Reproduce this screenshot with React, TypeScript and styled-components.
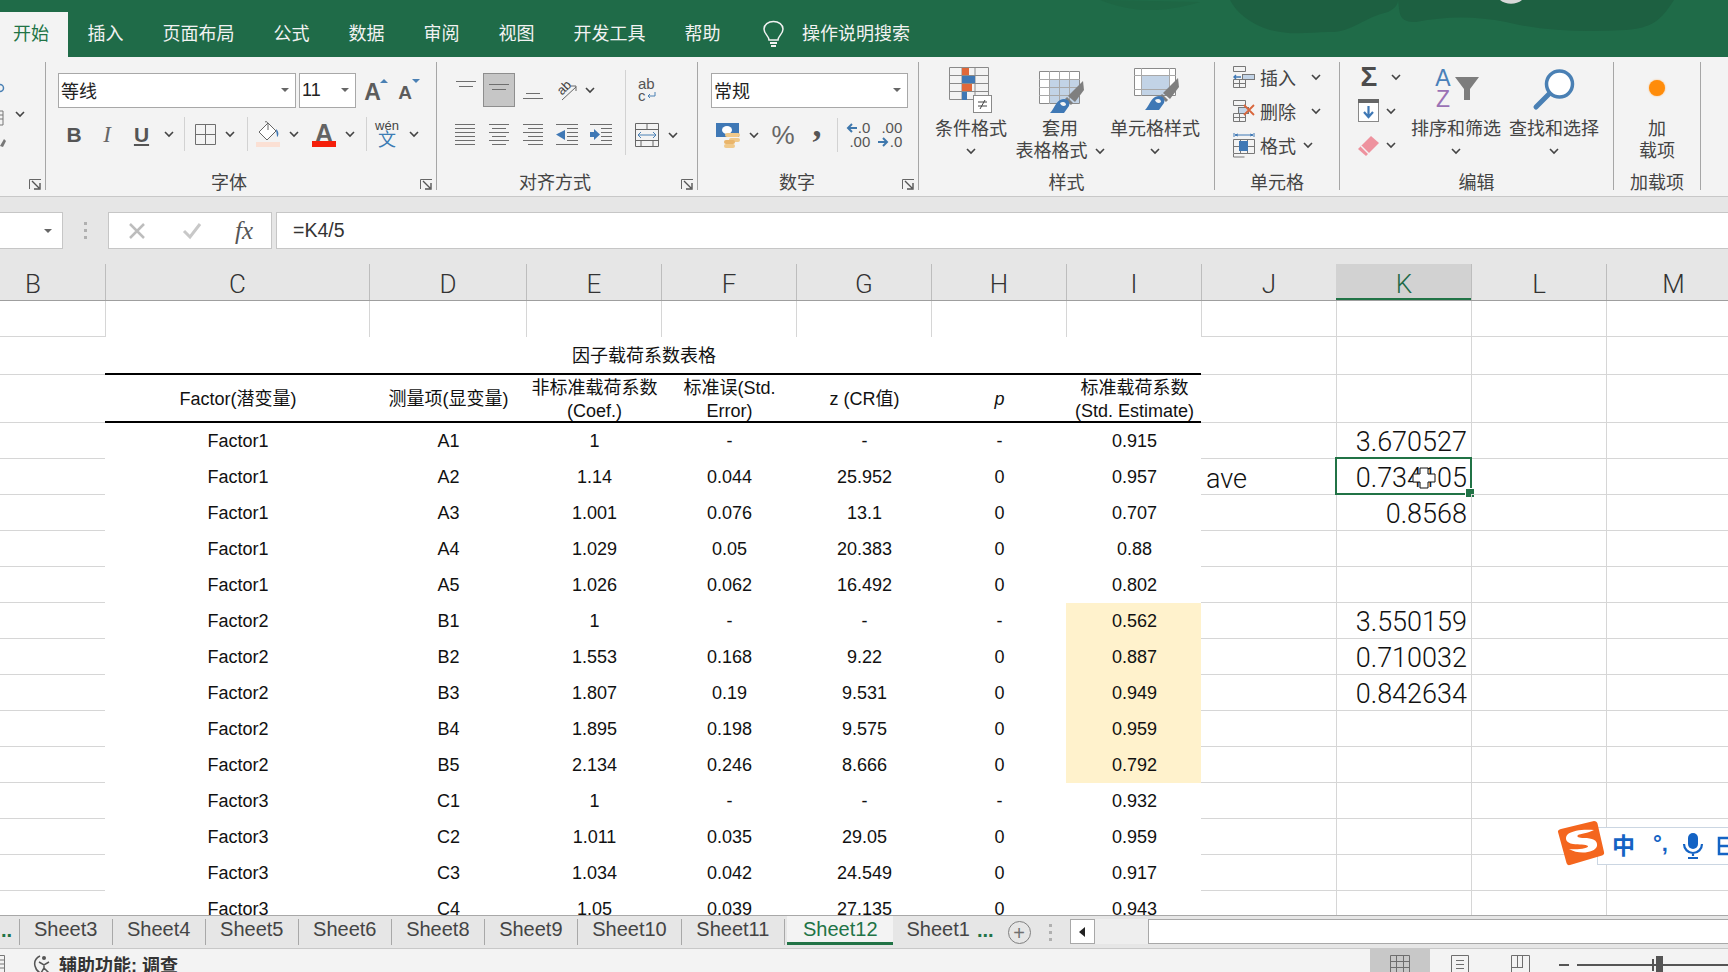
import React from "react";
import styled, { createGlobalStyle } from "styled-components";

const SANS = `"Liberation Sans", "Noto Sans CJK SC", sans-serif`;
const GREEN = "#217346";
const LINE = "#d6d6d6";

const Global = createGlobalStyle`
  html, body { margin: 0; padding: 0; background: #fff; }
  body { font-family: ${SANS}; overflow: hidden; }
  * { box-sizing: border-box; }
  svg { overflow: visible; }
`;

const Page = styled.div`
  position: relative; width: 1728px; height: 972px; overflow: hidden;
  display: flex; flex-direction: column; background: #fff; color: #222;
`;

/* ---------- title tabs ---------- */
const TabStrip = styled.div`
  position: relative; flex: 0 0 57px; display: flex; align-items: flex-end;
  background: #1f6b48; overflow: hidden;
`;
const Decor = styled.svg`
  position: absolute; left: 1080px; top: 0;
`;
const RibbonTab = styled.div<{ $active?: boolean }>`
  height: 45px; line-height: 45px; font-size: 18px; white-space: nowrap;
  padding: ${(p) => (p.$active ? "0 19px 0 13px" : "0 19.5px")};
  background: ${(p) => (p.$active ? "#f3f3f3" : "transparent")};
  color: ${(p) => (p.$active ? GREEN : "#f2f2f2")};
`;
const Bulb = styled.svg`
  margin: 0 18px 8px 23px; align-self: flex-end;
`;
const SearchHint = styled.div`
  height: 45px; line-height: 45px; font-size: 18px; color: #f2f2f2; white-space: nowrap;
`;

/* ---------- ribbon ---------- */
const Ribbon = styled.div`
  flex: 0 0 140px; display: flex; background: #f3f3f3; border-bottom: 1px solid #c8c8c8;
  padding-top: 5px; color: #333;
`;
const Group = styled.div<{ $w: number; $last?: boolean }>`
  position: relative; flex: 0 0 ${(p) => p.$w}px; height: 128px; display: flex; flex-direction: column;
  border-right: ${(p) => (p.$last ? "none" : "1px solid #a6a6a6")};
`;
const GroupBody = styled.div<{ $pl?: number; $column?: boolean }>`
  flex: 0 0 110px; display: flex; flex-direction: ${(p) => (p.$column ? "column" : "row")};
  padding-left: ${(p) => p.$pl ?? 0}px;
`;
const GroupLabel = styled.div<{ $pr?: number }>`
  height: 22px; line-height: 22px; text-align: center; font-size: 18px; color: #444; white-space: nowrap;
  padding-right: ${(p) => p.$pr ?? 0}px;
`;
const Launcher = styled.svg`
  position: absolute; right: 3px; bottom: 0;
`;
const ToolRow = styled.div<{ $top?: number }>`
  display: flex; align-items: center; height: 34px; margin-top: ${(p) => p.$top ?? 0}px;
`;
const Tool = styled.div<{ $w: number }>`
  flex: 0 0 ${(p) => p.$w}px; height: 100%; display: flex; align-items: center; justify-content: center;
  position: relative;
`;
const ToolSelected = styled(Tool)`
  background: #c6c6c6; border: 1px solid #8e8e8e;
`;
const ThinSep = styled.div<{ $w: number }>`
  flex: 0 0 ${(p) => p.$w}px; height: 34px; display: flex; justify-content: center;
  &::before { content: ""; width: 1px; background: #d2d2d2; }
`;
const Combo = styled.div<{ $w: number; $gap?: number }>`
  flex: 0 0 ${(p) => p.$w}px; height: 35px; background: #fff; border: 1px solid #a8a8a8;
  margin-left: ${(p) => p.$gap ?? 0}px;
  display: flex; align-items: center; justify-content: space-between;
  padding: 0 6px 0 2px; font-size: 18px; color: #222;
`;
const ComboCaret = styled.i`
  width: 0; height: 0; border: 4px solid transparent; border-top: 4px solid #666; border-bottom: 0;
`;
const ScaleA = styled.span<{ $size: number }>`
  font-size: ${(p) => p.$size}px; font-weight: 700; color: #5c5c5c; line-height: 1; margin-top: 5px;
`;
const ScaleMark = styled.i<{ $down?: boolean }>`
  position: absolute; right: 1px; top: 6px; width: 0; height: 0; border: 4px solid transparent;
  ${(p) => (p.$down ? "border-top: 4px solid #4a80b4; border-bottom: 0;" : "border-bottom: 4px solid #4a80b4; border-top: 0;")}
`;
const Glyph = styled.span<{ $bold?: boolean; $italic?: boolean; $serif?: boolean; $under?: boolean; $size?: number; $color?: string }>`
  font-family: ${(p) => (p.$serif ? `"Liberation Serif", serif` : SANS)};
  font-weight: ${(p) => (p.$bold ? 700 : 400)};
  font-style: ${(p) => (p.$italic ? "italic" : "normal")};
  text-decoration: ${(p) => (p.$under ? "underline" : "none")};
  font-size: ${(p) => p.$size ?? 20}px; color: ${(p) => p.$color ?? "#555"}; line-height: 1;
`;
const CommaGlyph = styled(Glyph)`
  margin-top: -22px;
`;
const FontColor = styled.div`
  display: flex; flex-direction: column; align-items: center; width: 24px; line-height: 1;
  font-weight: 700; font-size: 25px; color: #636363; height: 26px; position: relative;
  &::after { content: ""; position: absolute; left: 0; right: 0; bottom: 0; height: 6px; background: #f51f0a; }
`;
const Ruby = styled.div`
  display: flex; flex-direction: column; align-items: center; line-height: 1; color: #444; font-size: 13px;
  b { font-weight: 400; color: #3c7cb4; font-size: 18px; margin-top: -1px; }
`;
const DecimalStack = styled.div`
  display: flex; flex-direction: column; font-size: 15px; line-height: 14px; color: #555; align-items: flex-end;
  span { display: flex; align-items: center; gap: 1px; }
`;
const BlockSep = styled.div`
  flex: 0 0 1px; height: 85px; margin-top: 8px; background: #d2d2d2;
`;
const Block = styled.div<{ $w: number; $pl?: number; $top?: number }>`
  flex: 0 0 ${(p) => p.$w}px; padding-left: ${(p) => p.$pl ?? 0}px; padding-top: ${(p) => p.$top ?? 0}px;
  margin-top: ${(p) => (p.$top === undefined ? -2 : 0)}px;
`;
const BigButton = styled.div<{ $w: number }>`
  flex: 0 0 ${(p) => p.$w}px; display: flex; flex-direction: column; align-items: center;
  padding-top: 6px; font-size: 18px; line-height: 22px; color: #444; white-space: nowrap;
`;
const BigIcon = styled.div`
  height: 50px; margin-top: -1px; margin-bottom: 1px; display: flex; align-items: flex-start; justify-content: center; position: relative;
`;
const ChevLine = styled.div`
  height: 22px; display: flex; align-items: center; justify-content: center; gap: 7px;
`;
const CellStack = styled.div`
  margin-top: -2px;
`;
const CellAction = styled.div`
  display: flex; align-items: center; height: 34px; font-size: 18px; color: #444; gap: 5px;
`;
const ClipLeft = styled.div`
  position: relative; height: 110px;
`;
const ClipIcon = styled.svg`
  position: absolute; left: 0; top: 15px;
`;
const SortLetters = styled.div`
  display: flex; flex-direction: column; align-items: center; font-size: 23px; line-height: 21px; width: 20px;
  span:first-child { color: #4a80b9; }
  span:last-child { color: #9a72b5; }
`;
const SortIcon = styled.div`
  display: flex; align-items: center; gap: 2px; height: 44px;
`;
const DotWrap = styled.div`
  width: 16px; height: 16px; margin-top: 13px; border-radius: 50%; background: #ff8c0a;
  box-shadow: 0 0 2px #ffb060;
`;

/* ---------- formula bar ---------- */
const FormulaArea = styled.div`
  flex: 0 0 52px; background: #e6e6e6; padding-top: 15px; display: flex;
`;
const NameBox = styled.div`
  width: 63px; height: 37px; background: #fff; border: 1px solid #c6c6c6; border-left: 0;
  display: flex; align-items: center; justify-content: flex-end; padding-right: 10px;
`;
const Grip = styled.div`
  width: 45px; display: flex; flex-direction: column; align-items: center; justify-content: center; gap: 4px;
  i { width: 3px; height: 3px; background: #b0b0b0; }
`;
const FormulaButtons = styled.div`
  width: 164px; height: 37px; background: #fff; border: 1px solid #c6c6c6; display: flex; align-items: center;
`;
const FormulaBtn = styled.div<{ $w: number }>`
  flex: 0 0 ${(p) => p.$w}px; display: flex; justify-content: center; align-items: center;
`;
const FormulaInput = styled.div`
  flex: 1; margin-left: 4px; height: 37px; background: #fff; border: 1px solid #c6c6c6; border-right: 0;
  display: flex; align-items: center; padding-left: 16px; font-size: 19.5px; color: #333;
`;

/* ---------- grid ---------- */
const GRID = "105px 264px 157px repeat(8, 135px) 122px";
const ColumnBand = styled.div`
  flex: 0 0 52px; background: #e6e6e6; padding-top: 15px; border-bottom: 1px solid #9f9f9f;
  display: grid; grid-template-columns: ${GRID};
`;
const ColHead = styled.div<{ $active?: boolean; $last?: boolean; $first?: boolean }>`
  position: relative; display: flex; align-items: center; justify-content: center; font-family: Roboto, sans-serif; font-weight: 300;
  font-size: 26px; padding-top: 3px; color: ${(p) => (p.$active ? "#1d6a47" : "#333")};
  padding-right: ${(p) => (p.$first ? 40 : 0)}px; padding-left: ${(p) => (p.$last ? 13 : 1)}px;
  background: ${(p) => (p.$active ? "#d2d2d2" : "transparent")};
  box-shadow: ${(p) => (p.$last ? "none" : "1px 0 0 #bdbdbd")}${(p) => (p.$active ? `, inset 0 -2px 0 ${GREEN}` : "")};
`;
const Sheet = styled.div`
  flex: 0 0 614px; overflow: hidden; background: #fff;
`;
const Row = styled.div<{ $h: number }>`
  display: grid; grid-template-columns: ${GRID}; grid-template-rows: minmax(0, 1fr); height: ${(p) => p.$h}px;
`;
const Cell = styled.div<{ $r?: boolean; $b?: boolean; $thick?: boolean; $fill?: string }>`
  position: relative; display: flex; align-items: center; justify-content: center; text-align: center; min-height: 0;
  padding-left: 2px;
  font-size: 18px; line-height: 23px; color: #111; white-space: pre-line;
  box-shadow: ${(p) => (p.$r ? `1px 0 0 ${LINE}` : "none")};
  border-bottom: ${(p) => (p.$thick ? "2px solid #000" : p.$b ? `1px solid ${LINE}` : "none")};
  background: ${(p) => p.$fill ?? "transparent"};
`;
const HeadCell = styled(Cell)`
  padding-top: 3px;
`;
const TitleCell = styled(Cell)`
  grid-column: span 7; padding: 2px 18px 0 0;
`;
const CalcCell = styled(Cell)`
  justify-content: flex-end; padding: 4px 4px 0 0; font-family: Roboto, sans-serif; font-weight: 300; font-size: 27px; color: #111;
`;
const TextCell = styled(CalcCell)`
  justify-content: flex-start; padding: 6px 0 0 5px;
`;
const PValue = styled.span`
  font-style: italic;
`;
const Selection = styled.div`
  position: absolute; inset: -2px -1px -1px -1px; border: 2px solid ${GREEN}; pointer-events: none;
  &::after { content: ""; position: absolute; right: -5px; bottom: -5px; width: 8px; height: 8px; background: ${GREEN}; border: 1px solid #fff; }
`;
const CursorMark = styled.svg`
  position: absolute; left: 76px; top: 8px;
`;

/* ---------- sheet tabs ---------- */
const TabsBar = styled.div`
  flex: 0 0 34px; background: #e6e6e6; border-top: 1px solid #a8a8a8; border-bottom: 1px solid #c8c8c8;
  display: flex; align-items: stretch; padding-top: 3px; color: #444; font-size: 20px;
`;
const More = styled.div<{ $w?: number }>`
  flex: 0 0 ${(p) => p.$w ?? 20}px; color: ${GREEN}; font-weight: 700; line-height: 22px; height: 26px;
  text-align: ${(p) => (p.$w ? "center" : "left")}; padding-left: ${(p) => (p.$w ? 0 : 1)}px;
  border-right: ${(p) => (p.$w ? "none" : "1px solid #a8a8a8")};
`;
const SheetTab = styled.div<{ $active?: boolean; $plain?: boolean }>`
  height: ${(p) => (p.$active ? "29px" : "26px")}; line-height: 20px; white-space: nowrap;
  margin: ${(p) => (p.$active ? "-3px 0 0 2px" : "0")};
  padding: ${(p) => (p.$active ? "3px 15px 0 16px" : p.$plain ? "0 7px 0 14px" : "0 14.65px 0 14px")};
  background: ${(p) => (p.$active ? "#f3f3f3" : "transparent")};
  color: ${(p) => (p.$active ? GREEN : "#444")};
  border-right: ${(p) => (p.$active || p.$plain ? "none" : "1px solid #a8a8a8")};
  border-bottom: ${(p) => (p.$active ? `3px solid ${GREEN}` : "none")};
`;
const AddSheet = styled.div`
  width: 23px; height: 23px; margin: 2px 0 0 14px; border: 1.5px solid #808080; border-radius: 50%;
  display: flex; align-items: center; justify-content: center; color: #707070; font-size: 20px; line-height: 1;
`;
const TabGrip = styled(Grip)`
  width: 39px; height: 26px;
`;
const ScrollButton = styled.div`
  width: 25px; height: 25px; background: #fff; border: 1px solid #a8a8a8;
  display: flex; align-items: center; justify-content: center;
  &::before { content: ""; border: 5px solid transparent; border-right: 6px solid #222; border-left: 0; }
`;
const ScrollGap = styled.div`
  width: 53px; height: 25px; background: #eeeeee;
`;
const ScrollTrack = styled.div`
  flex: 1; height: 25px; background: #fff; border: 1px solid #a8a8a8; border-right: 0;
`;

/* ---------- status ---------- */
const StatusBar = styled.div`
  flex: 0 0 23px; background: #f3f3f3; display: flex; align-items: flex-start; overflow: hidden; color: #333;
`;
const StatusLeftIcon = styled.svg`
  margin: 6px 0 0 0;
`;
const AccessIcon = styled.svg`
  margin: 6px 5px 0 28px;
`;
const StatusText = styled.div`
  font-size: 18px; font-weight: 700; line-height: 22px; margin-top: 6px; white-space: nowrap;
`;
const ViewButton = styled.div<{ $active?: boolean }>`
  flex: 0 0 60px; height: 23px; display: flex; justify-content: center; padding-top: 6px;
  background: ${(p) => (p.$active ? "#c8c8c8" : "transparent")};
`;
const StatusRight = styled.div`
  margin-left: auto; display: flex; align-items: flex-start;
`;
const ZoomMinus = styled.div`
  width: 10px; height: 2px; background: #555; margin: 15px 0 0 9px;
`;
const ZoomTrack = styled.div`
  position: relative; width: 151px; height: 2px; background: #555; margin: 15px 0 0 8px;
  &::before { content: ""; position: absolute; left: 75px; top: -5px; width: 2px; height: 12px; background: #555; }
`;
const ZoomThumb = styled.div`
  position: absolute; left: 79px; top: -8px; width: 7px; height: 18px; background: #555;
`;

/* ---------- IME ---------- */
const Ime = styled.div`
  position: absolute; left: 1557px; top: 820px; width: 171px; height: 46px; font-family: ${SANS};
`;
const ImeBar = styled.div`
  position: absolute; left: 40px; top: 7px; right: 0; height: 38px; background: #fff; overflow: hidden;
  border: 1.5px solid #cbd6e2; border-right: 0; display: flex; align-items: center; padding-left: 14px; gap: 15px;
  color: #1463c4;
`;
const ImeZh = styled.span`
  font-size: 23px; font-weight: 700; line-height: 1;
`;
const ImePunct = styled.span`
  font-size: 22px; font-weight: 700; line-height: 1; margin: -4px 0 0 3px; white-space: nowrap; width: 24px;
`;
const ImeLogo = styled.svg`
  position: absolute; left: 0; top: 0;
`;

/* ---------- small drawings ---------- */
const Chev = ({ c = "#444" }: { c?: string }) => (
  <svg width="10" height="7" viewBox="0 0 10 7"><polyline points="1,1 5,5 9,1" fill="none" stroke={c} strokeWidth="1.6" /></svg>
);
const Lines = ({ w, rows, dy = 4, h, c = "#6e6e6e" }: { w: number; rows: [number, number][]; dy?: number; h: number; c?: string }) => (
  <svg width={w} height={h} viewBox={`0 0 ${w} ${h}`}>
    {rows.map(([a, b], i) => <line key={i} x1={a} x2={b} y1={i * dy + 0.5} y2={i * dy + 0.5} stroke={c} strokeWidth="1" />)}
  </svg>
);
const LauncherIcon = () => (
  <Launcher width="13" height="11" viewBox="0 0 13 11">
    <path d="M0.5 10V0.5H12" fill="none" stroke="#666" /><path d="M3 2l7 7M5 10h6V4" fill="none" stroke="#555" strokeWidth="1.4" />
  </Launcher>
);
const GridIcon = ({ children, w, h }: { children: React.ReactNode; w: number; h: number }) => (
  <svg width={w} height={h} viewBox={`0 0 ${w} ${h}`}>{children}</svg>
);
const Brush = ({ x, y }: { x: number; y: number }) => (
  <g transform={`translate(${x} ${y})`}>
    <path d="M33 3l1 9-9 12-7-6z" fill="#7f7f7f" />
    <path d="M16 20l6 6" stroke="#7f7f7f" strokeWidth="3" />
    <path d="M0 35c4-4 5-10 10-13 6-3 11 1 9 6l-5 7z" fill="#3f78b5" />
    <path d="M10 25c3-2 6-1 6 2-2 2-5 1-6-2z" fill="#f3f3f3" />
  </g>
);
const ArrowLeft = () => (
  <svg width="11" height="10" viewBox="0 0 11 10"><path d="M11 5H3M6 1L2 5l4 4" fill="none" stroke="#3f78ad" strokeWidth="2" /></svg>
);
const ArrowRight = () => (
  <svg width="11" height="10" viewBox="0 0 11 10"><path d="M0 5h8M5 1l4 4-4 4" fill="none" stroke="#3f78ad" strokeWidth="2" /></svg>
);

const rows: string[][] = [
  ["Factor1", "A1", "1", "-", "-", "-", "0.915"],
  ["Factor1", "A2", "1.14", "0.044", "25.952", "0", "0.957"],
  ["Factor1", "A3", "1.001", "0.076", "13.1", "0", "0.707"],
  ["Factor1", "A4", "1.029", "0.05", "20.383", "0", "0.88"],
  ["Factor1", "A5", "1.026", "0.062", "16.492", "0", "0.802"],
  ["Factor2", "B1", "1", "-", "-", "-", "0.562"],
  ["Factor2", "B2", "1.553", "0.168", "9.22", "0", "0.887"],
  ["Factor2", "B3", "1.807", "0.19", "9.531", "0", "0.949"],
  ["Factor2", "B4", "1.895", "0.198", "9.575", "0", "0.959"],
  ["Factor2", "B5", "2.134", "0.246", "8.666", "0", "0.792"],
  ["Factor3", "C1", "1", "-", "-", "-", "0.932"],
  ["Factor3", "C2", "1.011", "0.035", "29.05", "0", "0.959"],
  ["Factor3", "C3", "1.034", "0.042", "24.549", "0", "0.917"],
  ["Factor3", "C4", "1.05", "0.039", "27.135", "0", "0.943"],
];
const kValues: Record<number, string> = { 0: "3.670527", 1: "0.734105", 2: "0.8568", 5: "3.550159", 6: "0.710032", 7: "0.842634" };
const headers = ["Factor(潜变量)", "测量项(显变量)", "非标准载荷系数\n(Coef.)", "标准误(Std.\nError)", "z (CR值)", "", "标准载荷系数\n(Std. Estimate)"];
const letters = ["B", "C", "D", "E", "F", "G", "H", "I", "J", "K", "L", "M"];
const ribbonTabs = ["插入", "页面布局", "公式", "数据", "审阅", "视图", "开发工具", "帮助"];
const sheets = ["Sheet3", "Sheet4", "Sheet5", "Sheet6", "Sheet8", "Sheet9", "Sheet10", "Sheet11"];

const RightCols = ({ k, ave, sel }: { k?: string; ave?: boolean; sel?: boolean }) => (
  <>
    {ave ? <TextCell $r $b>ave</TextCell> : <Cell $r $b />}
    <CalcCell $r $b>
      {k}
      {sel && <Selection />}
      {sel && (
        <CursorMark width="24" height="22" viewBox="0 0 24 22">
          <path d="M8 1h8v6h7v8h-7v6H8v-6H1V7h7z" fill="#fff" stroke="#111" strokeWidth="1" />
        </CursorMark>
      )}
    </CalcCell>
    <Cell $r $b />
    <Cell $b />
  </>
);

export default function App() {
  return (
    <Page>
      <Global />
      <TabStrip>
        <Decor width="648" height="57" viewBox="0 0 648 57">
          <path d="M20 0c30 12 60 14 100 2z" fill="#1e6644" />
          <path d="M150 0c6 12 20 24 40 30 24 6 40 2 58 2 24 1 34-14 60-20 8-4 10-8 10-12z" fill="#1d6041" />
          <path d="M318 0c2 14 0 22 18 22 30-6 60-6 90 0 40 10 80 10 120 8 26-2 34-10 44-24l4-6z" fill="#1d6041" />
          <path d="M420 0c6 5 16 5 22 0z" fill="#d8d8d8" />
        </Decor>
        <RibbonTab $active>开始</RibbonTab>
        {ribbonTabs.map((t) => <RibbonTab key={t}>{t}</RibbonTab>)}
        <Bulb width="21" height="28" viewBox="0 0 21 28">
          <path d="M6 19c0-4-5-6-5-11a9.500 7.500 0 0 1 19 0c0 5-5 7-5 11z" fill="none" stroke="#f2f2f2" strokeWidth="1.5" />
          <path d="M7 22h7M8 25h5" stroke="#f2f2f2" strokeWidth="2" />
        </Bulb>
        <SearchHint>操作说明搜索</SearchHint>
      </TabStrip>

      <Ribbon>
        <Group $w={46}>
          <ClipLeft>
            <ClipIcon width="28" height="80" viewBox="0 0 28 80">
              <circle cx="0" cy="11" r="3.500" fill="none" stroke="#4a80b4" strokeWidth="1.5" />
              <path d="M-3 34h6v14h-6M0 38h3M0 42h3" fill="none" stroke="#777" />
              <path d="M0 69l4-7 2 2-3 6z" fill="#777" />
              <polyline points="16,35 20,39 24,35" fill="none" stroke="#444" strokeWidth="1.6" />
            </ClipIcon>
          </ClipLeft>
          <LauncherIcon />
        </Group>

        <Group $w={391}>
          <GroupBody $column $pl={12}>
            <ToolRow $top={11}>
              <Combo $w={238}>等线<ComboCaret /></Combo>
              <Combo $w={57} $gap={3}>11<ComboCaret /></Combo>
              <Tool $w={33}><ScaleA $size={23}>A</ScaleA><ScaleMark /></Tool>
              <Tool $w={32}><ScaleA $size={19}>A</ScaleA><ScaleMark $down /></Tool>
            </ToolRow>
            <ToolRow $top={10}>
              <Tool $w={32}><Glyph $bold $size={21}>B</Glyph></Tool>
              <Tool $w={34}><Glyph $italic $serif $size={23} $color="#666">I</Glyph></Tool>
              <Tool $w={35}><Glyph $under $size={21} $bold>U</Glyph></Tool>
              <Tool $w={20}><Chev /></Tool>
              <ThinSep $w={11} />
              <Tool $w={30}>
                <GridIcon w={21} h={21}><path d="M.5.5h20v20H.5zM10.500 0v21M0 10.500h21" fill="none" stroke="#6e6e6e" /></GridIcon>
              </Tool>
              <Tool $w={20}><Chev /></Tool>
              <ThinSep $w={14} />
              <Tool $w={28}>
                <GridIcon w={24} h={26}>
                  <path d="M12 2l-9 9 8 8 9-9z" fill="#fff" stroke="#666" />
                  <path d="M9 1c1-1 3 0 3 2v6" fill="none" stroke="#666" />
                  <path d="M20 8c3 2 3 7 1 8 0-3-1-5-1-8z" fill="#3f78b5" />
                  <rect y="21" width="24" height="5" fill="#fbe0d4" />
                </GridIcon>
              </Tool>
              <Tool $w={24}><Chev /></Tool>
              <Tool $w={36}><FontColor>A</FontColor></Tool>
              <Tool $w={16}><Chev /></Tool>
              <ThinSep $w={16} />
              <Tool $w={26}><Ruby>wén<b>文</b></Ruby></Tool>
              <Tool $w={28}><Chev /></Tool>
            </ToolRow>
          </GroupBody>
          <GroupLabel $pr={24}>字体</GroupLabel>
          <LauncherIcon />
        </Group>

        <Group $w={261}>
          <GroupBody $pl={11}>
            <Block $w={177} $top={11}>
              <ToolRow>
                <Tool $w={35}>
                  <svg width="20" height="18" viewBox="0 0 20 18"><path d="M0 .5h20M3 5.500h14" stroke="#6e6e6e" /></svg>
                </Tool>
                <ToolSelected $w={32}>
                  <Lines w={20} h={12} dy={5} rows={[[0, 20], [3, 17]]} />
                </ToolSelected>
                <Tool $w={36}>
                  <svg width="20" height="22" viewBox="0 0 20 22"><path d="M3 14.500h14M0 19.500h20" stroke="#6e6e6e" /></svg>
                </Tool>
                <Tool $w={32}>
                  <svg width="24" height="24" viewBox="0 0 24 24">
                    <text x="2" y="14" fontSize="13" fill="#444" fontFamily="Liberation Sans" transform="rotate(-45 9 10)">ab</text>
                    <path d="M7 22L21 9M16 8h5v5" fill="none" stroke="#666" />
                  </svg>
                </Tool>
                <Tool $w={14}><Chev /></Tool>
              </ToolRow>
              <ToolRow $top={11}>
                <Tool $w={34}><Lines w={20} h={22} rows={[[0, 20], [0, 20], [0, 20], [0, 20], [0, 20], [0, 20]]} /></Tool>
                <Tool $w={34}><Lines w={20} h={22} rows={[[0, 20], [3, 17], [0, 20], [3, 17], [0, 20], [3, 17]]} /></Tool>
                <Tool $w={34}><Lines w={20} h={22} rows={[[0, 20], [5, 20], [0, 20], [5, 20], [0, 20], [5, 20]]} /></Tool>
                <Tool $w={34}>
                  <svg width="22" height="22" viewBox="0 0 22 22">
                    <path d="M0 .5h22M11 4.500h11M11 8.500h11M11 12.500h11M11 16.500h11M0 20.500h22" stroke="#6e6e6e" />
                    <path d="M9 6v10L0 10.500z" fill="#3f78b5" />
                  </svg>
                </Tool>
                <Tool $w={34}>
                  <svg width="22" height="22" viewBox="0 0 22 22">
                    <path d="M0 .5h22M11 4.500h11M11 8.500h11M11 12.500h11M11 16.500h11M0 20.500h22" stroke="#6e6e6e" />
                    <path d="M0 8h4V5l6 5.500L4 16v-3H0z" fill="#3f78b5" />
                  </svg>
                </Tool>
              </ToolRow>
            </Block>
            <BlockSep />
            <Block $w={64} $pl={8} $top={11}>
              <ToolRow>
                <Tool $w={28}>
                  <svg width="22" height="26" viewBox="0 0 22 26">
                    <text x="1" y="12" fontSize="15" fill="#555" fontFamily="Liberation Sans">ab</text>
                    <text x="1" y="24" fontSize="15" fill="#555" fontFamily="Liberation Sans">c</text>
                    <path d="M18 15v4h-7M13 17l-2 2 2 2" fill="none" stroke="#4a80b4" />
                  </svg>
                </Tool>
              </ToolRow>
              <ToolRow $top={11}>
                <Tool $w={26}>
                  <GridIcon w={24} h={24}>
                    <path d="M.5.5h23v23H.5zM0 6.500h24M0 17.500h24M12 0v6M6 18v6M18 18v6M12 6" fill="none" stroke="#666" />
                    <path d="M3 12h18M6 9l-3 3 3 3M18 9l3 3-3 3" fill="none" stroke="#4a80b4" />
                  </GridIcon>
                </Tool>
                <Tool $w={26}><Chev /></Tool>
              </ToolRow>
            </Block>
          </GroupBody>
          <GroupLabel $pr={24}>对齐方式</GroupLabel>
          <LauncherIcon />
        </Group>

        <Group $w={221}>
          <GroupBody $column $pl={13}>
            <ToolRow $top={11}><Combo $w={197}>常规<ComboCaret /></Combo></ToolRow>
            <ToolRow $top={11}>
              <Tool $w={34}>
                <GridIcon w={24} h={25}>
                  <rect width="23" height="14" fill="#3f78b5" />
                  <ellipse cx="11" cy="7" rx="5" ry="4" fill="#fff" />
                  <rect x="9" y="10" width="15" height="4" rx="2" fill="#f0c98a" />
                  <rect x="13" y="15" width="11" height="4" rx="2" fill="#f0c98a" />
                  <rect x="8" y="17" width="11" height="4" rx="2" fill="#eab56a" />
                  <rect x="8" y="21" width="11" height="4" rx="2" fill="#f0c98a" />
                </GridIcon>
              </Tool>
              <Tool $w={18}><Chev /></Tool>
              <Tool $w={40}><Glyph $size={26} $color="#666">%</Glyph></Tool>
              <Tool $w={28}><CommaGlyph $bold $serif $size={36} $color="#555">,</CommaGlyph></Tool>
              <ThinSep $w={12} />
              <Tool $w={30}>
                <DecimalStack><span><ArrowLeft />.0</span><span>.00</span></DecimalStack>
              </Tool>
              <Tool $w={34}>
                <DecimalStack><span>.00</span><span><ArrowRight />.0</span></DecimalStack>
              </Tool>
            </ToolRow>
          </GroupBody>
          <GroupLabel $pr={22}>数字</GroupLabel>
          <LauncherIcon />
        </Group>

        <Group $w={296}>
          <GroupBody $pl={8}>
            <BigButton $w={88}>
              <BigIcon>
                <GridIcon w={44} h={46}>
                  <path d="M.5.5h39v32H.5zM0 8.500h40M0 16.500h40M0 24.500h40M13 0v33M26 0v33" fill="none" stroke="#8a8a8a" />
                  <rect x="13" y="1" width="7" height="7" fill="#e0683a" />
                  <rect x="13" y="9" width="13" height="7" fill="#3f78b5" />
                  <rect x="13" y="17" width="10" height="7" fill="#e0683a" />
                  <rect x="13" y="25" width="5" height="8" fill="#3f78b5" />
                  <rect x="24.500" y="28.500" width="18" height="17" fill="#fff" stroke="#8a8a8a" />
                  <path d="M29 35h9M29 39h9M36 33l-5 9" stroke="#444" fill="none" />
                </GridIcon>
              </BigIcon>
              条件格式
              <ChevLine><Chev /></ChevLine>
            </BigButton>
            <BigButton $w={90}>
              <BigIcon>
                <GridIcon w={48} h={47}>
                  <path d="M3.500 4.500h40v32h-40z" fill="#fff" stroke="#8a8a8a" />
                  <rect x="13" y="12" width="30" height="24" fill="#c2d3e6" />
                  <path d="M3 12.500h41M3 20.500h41M3 28.500h41M13.500 4v33M23.500 4v33M33.500 4v33" fill="none" stroke="#a8a8a8" />
                  <Brush x={14} y={11} />
                </GridIcon>
              </BigIcon>
              套用
              <ChevLine>表格格式<Chev /></ChevLine>
            </BigButton>
            <BigButton $w={100}>
              <BigIcon>
                <GridIcon w={48} h={44}>
                  <path d="M3.500 1.500h41v27h-41z" fill="#fff" stroke="#8a8a8a" />
                  <rect x="10" y="8" width="28" height="20" fill="#c2d3e6" />
                  <path d="M3 8.500h42M3 22.500h42M10.500 1v28M38.500 1v28" fill="none" stroke="#a8a8a8" />
                  <Brush x={14} y={8} />
                </GridIcon>
              </BigIcon>
              单元格样式
              <ChevLine><Chev /></ChevLine>
            </BigButton>
          </GroupBody>
          <GroupLabel>样式</GroupLabel>
        </Group>

        <Group $w={125}>
          <GroupBody $column $pl={18}>
            <CellStack>
              <CellAction>
                <GridIcon w={22} h={22}>
                  <path d="M.5.5h12v5H.5zM.5 13.500h12v8H.5zM6.500 14v8M0 17.500h13" fill="none" stroke="#777" />
                  <rect x="9.500" y="8.500" width="12" height="5" fill="#c2d3e6" stroke="#777" />
                  <path d="M8 11H1M3 9l-2 2 2 2" fill="none" stroke="#3f78b5" strokeWidth="1.4" />
                </GridIcon>
                插入
                <Tool $w={30}><Chev /></Tool>
              </CellAction>
              <CellAction>
                <GridIcon w={22} h={22}>
                  <path d="M.5.5h12v5H.5zM.5 13.500h12v8H.5zM6.500 14v8M0 17.500h13" fill="none" stroke="#777" />
                  <rect x="5.500" y="7.500" width="10" height="6" fill="#c2d3e6" stroke="#777" />
                  <path d="M11 5l10 10M21 5L11 15" stroke="#d9663c" strokeWidth="1.8" />
                </GridIcon>
                删除
                <Tool $w={30}><Chev /></Tool>
              </CellAction>
              <CellAction>
                <GridIcon w={22} h={24}>
                  <path d="M.5 6.500h21v14H.5zM7.500 6v15M14.500 6v15M0 13.500h22M.5 21v3h11" fill="none" stroke="#777" />
                  <rect x="6" y="8" width="9" height="10" fill="#3f78b5" />
                  <path d="M1 0v4M21 0v4M2 2h18M5 1L2 2l3 1M17 1l3 1-3 1" fill="none" stroke="#3f78b5" />
                </GridIcon>
                格式
                <Tool $w={14}><Chev /></Tool>
              </CellAction>
            </CellStack>
          </GroupBody>
          <GroupLabel>单元格</GroupLabel>
        </Group>

        <Group $w={274}>
          <GroupBody>
            <Block $w={69} $pl={18}>
              <CellAction>
                <Tool $w={22}><Glyph $size={28} $color="#4c4c4c" $bold>Σ</Glyph></Tool>
                <Tool $w={22}><Chev /></Tool>
              </CellAction>
              <CellAction>
                <GridIcon w={22} h={24}>
                  <rect x=".5" y=".5" width="20" height="22" fill="#fff" stroke="#888" />
                  <rect width="21" height="4" fill="#666" />
                  <path d="M10.500 7v11M6 13l4.500 5 4.500-5" fill="none" stroke="#3f78b5" strokeWidth="2.2" />
                </GridIcon>
                <Tool $w={12}><Chev /></Tool>
              </CellAction>
              <CellAction>
                <GridIcon w={22} h={22}>
                  <path d="M0 15L13 2l8 7-13 13z" fill="#ee929e" />
                  <path d="M3 12l8 8" stroke="#f3f3f3" strokeWidth="1.500" />
                </GridIcon>
                <Tool $w={12}><Chev /></Tool>
              </CellAction>
            </Block>
            <BigButton $w={94}>
              <BigIcon>
                <SortIcon>
                  <SortLetters><span>A</span><span>Z</span></SortLetters>
                  <GridIcon w={24} h={24}>
                    <path d="M0 0h24L15 12v11H9V12z" fill="#7d7d7d" />
                  </GridIcon>
                </SortIcon>
              </BigIcon>
              排序和筛选
              <ChevLine><Chev /></ChevLine>
            </BigButton>
            <BigButton $w={102}>
              <BigIcon>
                <GridIcon w={42} h={44}>
                  <circle cx="26.500" cy="17" r="13" fill="#fff" stroke="#4a80b4" strokeWidth="3.500" />
                  <path d="M16 27L3 40" stroke="#4a80b4" strokeWidth="5" strokeLinecap="round" />
                </GridIcon>
              </BigIcon>
              查找和选择
              <ChevLine><Chev /></ChevLine>
            </BigButton>
          </GroupBody>
          <GroupLabel>编辑</GroupLabel>
        </Group>

        <Group $w={87}>
          <GroupBody>
            <BigButton $w={86}>
              <BigIcon><DotWrap /></BigIcon>
              加
              <ChevLine>载项</ChevLine>
            </BigButton>
          </GroupBody>
          <GroupLabel>加载项</GroupLabel>
        </Group>
      </Ribbon>

      <FormulaArea>
        <NameBox><ComboCaret /></NameBox>
        <Grip><i /><i /><i /></Grip>
        <FormulaButtons>
          <FormulaBtn $w={55}>
            <svg width="18" height="18" viewBox="0 0 18 18"><path d="M2 2l14 14M16 2L2 16" stroke="#bdbdbd" strokeWidth="2.500" /></svg>
          </FormulaBtn>
          <FormulaBtn $w={55}>
            <svg width="20" height="18" viewBox="0 0 20 18"><path d="M2 9l6 6L18 2" fill="none" stroke="#c8c8c8" strokeWidth="3" /></svg>
          </FormulaBtn>
          <FormulaBtn $w={50}><Glyph $italic $serif $size={25} $color="#555">fx</Glyph></FormulaBtn>
        </FormulaButtons>
        <FormulaInput>=K4/5</FormulaInput>
      </FormulaArea>

      <ColumnBand>
        {letters.map((l, i) => <ColHead key={l} $active={l === "K"} $first={i === 0} $last={i === letters.length - 1}>{l}</ColHead>)}
      </ColumnBand>

      <Sheet>
        <Row $h={36}>
          <Cell $r $b />
          <Cell $r /><Cell $r /><Cell $r /><Cell $r /><Cell $r /><Cell $r /><Cell $r />
          <Cell $r $b /><Cell $r $b /><Cell $r $b /><Cell $b />
        </Row>
        <Row $h={38}>
          <Cell $b />
          <TitleCell $thick>因子载荷系数表格</TitleCell>
          <RightCols />
        </Row>
        <Row $h={48}>
          <Cell $b />
          {headers.map((h, i) => (
            <HeadCell key={i} $thick>{i === 5 ? <PValue>p</PValue> : h}</HeadCell>
          ))}
          <RightCols />
        </Row>
        {rows.map((r, i) => (
          <Row key={i} $h={36}>
            <Cell $b />
            {r.map((v, j) => (
              <Cell key={j} $fill={j === 6 && i >= 5 && i <= 9 ? "#fff2cc" : undefined}>{v}</Cell>
            ))}
            <RightCols k={kValues[i]} ave={i === 1} sel={i === 1} />
          </Row>
        ))}
      </Sheet>

      <TabsBar>
        <More>..</More>
        {sheets.map((s) => <SheetTab key={s}>{s}</SheetTab>)}
        <SheetTab $active>Sheet12</SheetTab>
        <SheetTab $plain>Sheet1</SheetTab>
        <More $w={14}>...</More>
        <AddSheet>+</AddSheet>
        <TabGrip><i /><i /><i /></TabGrip>
        <ScrollButton />
        <ScrollGap />
        <ScrollTrack />
      </TabsBar>

      <StatusBar>
        <StatusLeftIcon width="5" height="17" viewBox="0 0 5 17"><path d="M0 .5h4.500V17M0 5h4M0 9h4M0 13h4" fill="none" stroke="#777" /></StatusLeftIcon>
        <AccessIcon width="21" height="20" viewBox="0 0 21 20">
          <path d="M7 1C3 3 1 7 2 11c1 4 4 7 8 8" fill="none" stroke="#555" strokeWidth="1.5" />
          <circle cx="11" cy="3" r="2" fill="#555" />
          <path d="M6 7l5 3 5-3M11 10v3l-3 5M11 13l5 5" fill="none" stroke="#555" strokeWidth="1.500" />
        </AccessIcon>
        <StatusText>辅助功能: 调查</StatusText>
        <StatusRight>
          <ViewButton $active>
            <svg width="20" height="20" viewBox="0 0 20 20"><path d="M.5.5h19v19H.5zM0 6.500h20M0 12.500h20M6.500 0v20M13.500 0v20" fill="none" stroke="#6e6e6e" /></svg>
          </ViewButton>
          <ViewButton>
            <svg width="18" height="20" viewBox="0 0 18 20"><path d="M.5.5h17v19H.5zM5 5.500h8M5 9.500h8M5 13.500h8M5 17.500h8" fill="none" stroke="#6e6e6e" /></svg>
          </ViewButton>
          <ViewButton>
            <svg width="19" height="20" viewBox="0 0 19 20"><path d="M.5.5h18v19H.5zM0 12.500h11M11.500 0v13M6.500 0v13" fill="none" stroke="#6e6e6e" /></svg>
          </ViewButton>
          <ZoomMinus />
          <ZoomTrack><ZoomThumb /></ZoomTrack>
        </StatusRight>
      </StatusBar>

      <Ime>
        <ImeBar>
          <ImeZh>中</ImeZh>
          <ImePunct>°,</ImePunct>
          <svg width="20" height="28" viewBox="0 0 20 28">
            <rect x="5" y="1" width="10" height="16" rx="5" fill="#1463c4" />
            <path d="M1 12a9 9 0 0 0 18 0M10 21v3M5 26h10" fill="none" stroke="#1463c4" strokeWidth="2.200" />
          </svg>
          <svg width="14" height="22" viewBox="0 0 14 22"><path d="M1 3h20v16H1zM1 11h20" fill="none" stroke="#1463c4" strokeWidth="2.500" /></svg>
        </ImeBar>
        <ImeLogo width="48" height="46" viewBox="0 0 48 46">
          <path d="M4 9l33-8c2 0 3 1 3.500 2.500L47 32c.5 2-.5 3-2 3.500L13 45c-2 .5-3-.5-3.500-2L1 12c-.5-1.500 1-2.500 3-3z" fill="#f4661e" />
          <path d="M37 10c-9-1-21 0-26 4-4 4-2 9 5 10 6 1 13 0 15 2 1 2-9 4-19 3 10 6 26 4 28-3 1-6-5-8-13-8-5 0-8-1-6-3 2-1 10-2 16-5z" fill="#fff" />
        </ImeLogo>
      </Ime>
    </Page>
  );
}
